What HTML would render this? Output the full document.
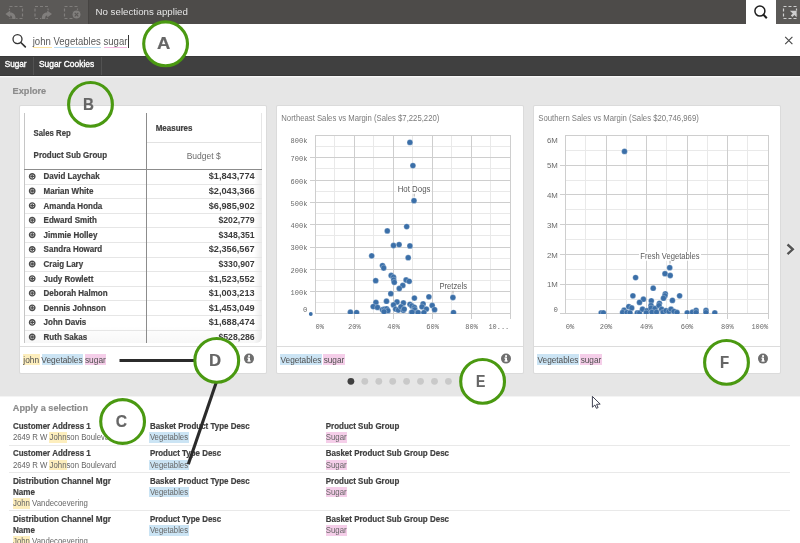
<!DOCTYPE html>
<html lang="en"><head><meta charset="utf-8"><title>Smart search</title>
<style>
html,body{margin:0;padding:0}
body{width:800px;height:543px;overflow:hidden;position:relative;background:#fff;font-family:'Liberation Sans', sans-serif;}
.abs{position:absolute}
.t{position:absolute;white-space:pre;display:block}
.card{position:absolute;background:#fff;box-shadow:0 0 0 1px #dbdbdb;border-radius:1px}
.hl{position:absolute}
</style></head><body>
<!-- top bar -->
<div class="abs" style="left:0;top:0;width:800px;height:24px;background:#4d4b49"></div>
<div class="abs" style="left:0;top:0;width:88px;height:24px;background:#5b5957"></div>
<div class="abs" style="left:88px;top:0;width:1px;height:24px;background:#464442"></div>
<div class="abs" style="left:746px;top:0;width:30px;height:24px;background:#fff"></div>
<div class="abs" style="left:776px;top:0;width:24px;height:24px;background:#5b5957"></div>
<!-- search bar -->
<div class="abs" style="left:0;top:24px;width:800px;height:32px;background:#fff"></div>
<div class="abs" style="left:0;top:56px;width:800px;height:20px;background:#404040;box-shadow:inset 0 1px 0 #383838,inset 0 -1px 0 #383838"></div>
<div class="abs" style="left:33px;top:57px;width:1px;height:18px;background:#525252"></div>
<div class="abs" style="left:101px;top:57px;width:1px;height:18px;background:#525252"></div>
<!-- explore area -->
<div class="abs" style="left:0;top:76px;width:800px;height:320px;background:#e6e6e6"></div>
<div class="abs" style="left:0;top:76px;width:800px;height:1px;background:#f7f7f7"></div>
<div class="abs" style="left:0;top:77px;width:800px;height:1px;background:#ececec"></div>
<div class="abs" style="left:0;top:396px;width:800px;height:1px;background:#f4f4f4"></div>
<!-- underline in search -->
<div class="abs" style="left:32.7px;top:47px;width:18.9px;height:1px;background:#ffe6a2"></div>
<div class="abs" style="left:54.3px;top:47px;width:47.2px;height:1px;background:#bcddf2"></div>
<div class="abs" style="left:103.8px;top:47px;width:23.6px;height:1px;background:#f2b8e0"></div>
<div class="abs" style="left:128px;top:35px;width:1px;height:13px;background:#333"></div>
<!-- cards -->
<div class="card" style="left:20px;top:106px;width:246px;height:267px"></div>
<div class="card" style="left:277px;top:106px;width:246px;height:267px"></div>
<div class="card" style="left:534px;top:106px;width:246px;height:267px"></div>
<div class="abs" style="left:20px;top:346px;width:246px;height:1px;background:#dcdcdc"></div>
<div class="abs" style="left:277px;top:346px;width:246px;height:1px;background:#dcdcdc"></div>
<div class="abs" style="left:534px;top:346px;width:246px;height:1px;background:#dcdcdc"></div>
<!-- table -->
<div class="abs" style="left:24px;top:113px;width:238px;height:230px;border-left:1px solid #c6c6c6;box-sizing:border-box;border-bottom-right-radius:6px;overflow:hidden;background:#fff">
  <div class="abs" style="left:0;top:213px;width:238px;height:17px;background:linear-gradient(to bottom,rgba(0,0,0,0) 0%,rgba(0,0,0,0.03) 100%)"></div>
  <div class="abs" style="left:229px;top:56px;width:9px;height:174px;background:linear-gradient(to right,rgba(0,0,0,0) 0%,rgba(0,0,0,0.09) 100%)"></div>
</div>
<div class="abs" style="left:25px;top:183.5px;width:237px;height:1px;background:#e6e6e6"></div><div class="abs" style="left:25px;top:198.1px;width:237px;height:1px;background:#e6e6e6"></div><div class="abs" style="left:25px;top:212.7px;width:237px;height:1px;background:#e6e6e6"></div><div class="abs" style="left:25px;top:227.3px;width:237px;height:1px;background:#e6e6e6"></div><div class="abs" style="left:25px;top:241.9px;width:237px;height:1px;background:#e6e6e6"></div><div class="abs" style="left:25px;top:256.5px;width:237px;height:1px;background:#e6e6e6"></div><div class="abs" style="left:25px;top:271.1px;width:237px;height:1px;background:#e6e6e6"></div><div class="abs" style="left:25px;top:285.7px;width:237px;height:1px;background:#e6e6e6"></div><div class="abs" style="left:25px;top:300.3px;width:237px;height:1px;background:#e6e6e6"></div><div class="abs" style="left:25px;top:314.9px;width:237px;height:1px;background:#e6e6e6"></div><div class="abs" style="left:25px;top:329.5px;width:237px;height:1px;background:#e6e6e6"></div>
<div class="abs" style="left:146px;top:113px;width:1px;height:230px;background:#8c8c8c"></div>
<div class="abs" style="left:147px;top:142px;width:115px;height:1px;background:#e2e2e2"></div>
<div class="abs" style="left:261px;top:113px;width:1px;height:56px;background:#e6e6e6"></div>
<div class="abs" style="left:24px;top:169px;width:238px;height:1px;background:#8c8c8c"></div>
<svg class="abs" style="left:0;top:0" width="270" height="345"><g transform="translate(32.2,176.4)"><circle r="2.7" fill="#fff" stroke="#4a4a4a" stroke-width="1.4"/><path d="M-1.8 0H1.8M0 -1.8V1.8" stroke="#4a4a4a" stroke-width="1.3"/></g><g transform="translate(32.2,191.0)"><circle r="2.7" fill="#fff" stroke="#4a4a4a" stroke-width="1.4"/><path d="M-1.8 0H1.8M0 -1.8V1.8" stroke="#4a4a4a" stroke-width="1.3"/></g><g transform="translate(32.2,205.6)"><circle r="2.7" fill="#fff" stroke="#4a4a4a" stroke-width="1.4"/><path d="M-1.8 0H1.8M0 -1.8V1.8" stroke="#4a4a4a" stroke-width="1.3"/></g><g transform="translate(32.2,220.2)"><circle r="2.7" fill="#fff" stroke="#4a4a4a" stroke-width="1.4"/><path d="M-1.8 0H1.8M0 -1.8V1.8" stroke="#4a4a4a" stroke-width="1.3"/></g><g transform="translate(32.2,234.8)"><circle r="2.7" fill="#fff" stroke="#4a4a4a" stroke-width="1.4"/><path d="M-1.8 0H1.8M0 -1.8V1.8" stroke="#4a4a4a" stroke-width="1.3"/></g><g transform="translate(32.2,249.4)"><circle r="2.7" fill="#fff" stroke="#4a4a4a" stroke-width="1.4"/><path d="M-1.8 0H1.8M0 -1.8V1.8" stroke="#4a4a4a" stroke-width="1.3"/></g><g transform="translate(32.2,264.0)"><circle r="2.7" fill="#fff" stroke="#4a4a4a" stroke-width="1.4"/><path d="M-1.8 0H1.8M0 -1.8V1.8" stroke="#4a4a4a" stroke-width="1.3"/></g><g transform="translate(32.2,278.6)"><circle r="2.7" fill="#fff" stroke="#4a4a4a" stroke-width="1.4"/><path d="M-1.8 0H1.8M0 -1.8V1.8" stroke="#4a4a4a" stroke-width="1.3"/></g><g transform="translate(32.2,293.2)"><circle r="2.7" fill="#fff" stroke="#4a4a4a" stroke-width="1.4"/><path d="M-1.8 0H1.8M0 -1.8V1.8" stroke="#4a4a4a" stroke-width="1.3"/></g><g transform="translate(32.2,307.8)"><circle r="2.7" fill="#fff" stroke="#4a4a4a" stroke-width="1.4"/><path d="M-1.8 0H1.8M0 -1.8V1.8" stroke="#4a4a4a" stroke-width="1.3"/></g><g transform="translate(32.2,322.4)"><circle r="2.7" fill="#fff" stroke="#4a4a4a" stroke-width="1.4"/><path d="M-1.8 0H1.8M0 -1.8V1.8" stroke="#4a4a4a" stroke-width="1.3"/></g><g transform="translate(32.2,337.0)"><circle r="2.7" fill="#fff" stroke="#4a4a4a" stroke-width="1.4"/><path d="M-1.8 0H1.8M0 -1.8V1.8" stroke="#4a4a4a" stroke-width="1.3"/></g></svg>
<!-- highlight boxes -->
<div class="hl" style="left:23px;top:354px;width:17px;height:11px;background:#fdeebd"></div>
<div class="hl" style="left:42.0px;top:354px;width:41px;height:11px;background:#cbe4f4"></div>
<div class="hl" style="left:85.0px;top:354px;width:21px;height:11px;background:#f5cee9"></div>
<div class="hl" style="left:280.1px;top:354px;width:41.5px;height:11px;background:#cbe4f4"></div>
<div class="hl" style="left:323.3px;top:354px;width:21.3px;height:11px;background:#f5cee9"></div>
<div class="hl" style="left:537.1px;top:354px;width:41.5px;height:11px;background:#cbe4f4"></div>
<div class="hl" style="left:580.3px;top:354px;width:21.3px;height:11px;background:#f5cee9"></div>
<!-- bottom list dividers -->
<div class="abs" style="left:9px;top:445px;width:781px;height:1px;background:#e9e9e9"></div>
<div class="abs" style="left:9px;top:472px;width:781px;height:1px;background:#e9e9e9"></div>
<div class="abs" style="left:9px;top:510px;width:781px;height:1px;background:#e9e9e9"></div>
<!-- bottom highlights -->
<div class="hl" style="left:49px;top:432.2px;width:17.8px;height:10.4px;background:#fdeebd"></div>
<div class="hl" style="left:49px;top:459.6px;width:17.8px;height:10.4px;background:#fdeebd"></div>
<div class="hl" style="left:12.6px;top:498.2px;width:17.8px;height:10.4px;background:#fdeebd"></div>
<div class="hl" style="left:12.6px;top:535.7px;width:17.8px;height:10.4px;background:#fdeebd"></div>
<div class="hl" style="left:149.1px;top:432.2px;width:39.7px;height:10.4px;background:#cbe4f4"></div><div class="hl" style="left:326px;top:432.2px;width:21px;height:10.4px;background:#f5cee9"></div><div class="hl" style="left:149.1px;top:459.6px;width:39.7px;height:10.4px;background:#cbe4f4"></div><div class="hl" style="left:326px;top:459.6px;width:21px;height:10.4px;background:#f5cee9"></div><div class="hl" style="left:149.1px;top:486.9px;width:39.7px;height:10.4px;background:#cbe4f4"></div><div class="hl" style="left:326px;top:486.9px;width:21px;height:10.4px;background:#f5cee9"></div><div class="hl" style="left:149.1px;top:525.2px;width:39.7px;height:10.4px;background:#cbe4f4"></div><div class="hl" style="left:326px;top:525.2px;width:21px;height:10.4px;background:#f5cee9"></div>

<svg class="abs" style="left:0;top:0" width="800" height="543" viewBox="0 0 800 543" shape-rendering="auto">
<defs>
<clipPath id="cp1"><rect x="309" y="130" width="205" height="184"/></clipPath>
<clipPath id="cp2"><rect x="560" y="130" width="212" height="184"/></clipPath>
</defs>
<line x1="334.5" y1="135" x2="334.5" y2="314.0" stroke="#e9e9e9" stroke-width="1"/>
<line x1="373.5" y1="135" x2="373.5" y2="314.0" stroke="#e9e9e9" stroke-width="1"/>
<line x1="412.5" y1="135" x2="412.5" y2="314.0" stroke="#e9e9e9" stroke-width="1"/>
<line x1="451.5" y1="135" x2="451.5" y2="314.0" stroke="#e9e9e9" stroke-width="1"/>
<line x1="490.5" y1="135" x2="490.5" y2="314.0" stroke="#e9e9e9" stroke-width="1"/>
<line x1="315.0" y1="302.5" x2="511" y2="302.5" stroke="#e9e9e9" stroke-width="1"/>
<line x1="315.0" y1="280.5" x2="511" y2="280.5" stroke="#e9e9e9" stroke-width="1"/>
<line x1="315.0" y1="258.5" x2="511" y2="258.5" stroke="#e9e9e9" stroke-width="1"/>
<line x1="315.0" y1="235.5" x2="511" y2="235.5" stroke="#e9e9e9" stroke-width="1"/>
<line x1="315.0" y1="213.5" x2="511" y2="213.5" stroke="#e9e9e9" stroke-width="1"/>
<line x1="315.0" y1="191.5" x2="511" y2="191.5" stroke="#e9e9e9" stroke-width="1"/>
<line x1="315.0" y1="168.5" x2="511" y2="168.5" stroke="#e9e9e9" stroke-width="1"/>
<line x1="315.0" y1="146.5" x2="511" y2="146.5" stroke="#e9e9e9" stroke-width="1"/>
<line x1="315.5" y1="135" x2="315.5" y2="314.0" stroke="#cecece" stroke-width="1"/>
<line x1="354.5" y1="135" x2="354.5" y2="319.0" stroke="#cecece" stroke-width="1"/>
<line x1="393.5" y1="135" x2="393.5" y2="319.0" stroke="#cecece" stroke-width="1"/>
<line x1="432.5" y1="135" x2="432.5" y2="319.0" stroke="#cecece" stroke-width="1"/>
<line x1="471.5" y1="135" x2="471.5" y2="319.0" stroke="#cecece" stroke-width="1"/>
<line x1="510.5" y1="135" x2="510.5" y2="319.0" stroke="#cecece" stroke-width="1"/>
<line x1="315.0" y1="313.5" x2="511" y2="313.5" stroke="#cecece" stroke-width="1"/>
<line x1="310.0" y1="291.5" x2="511" y2="291.5" stroke="#cecece" stroke-width="1"/>
<line x1="310.0" y1="269.5" x2="511" y2="269.5" stroke="#cecece" stroke-width="1"/>
<line x1="310.0" y1="247.5" x2="511" y2="247.5" stroke="#cecece" stroke-width="1"/>
<line x1="310.0" y1="224.5" x2="511" y2="224.5" stroke="#cecece" stroke-width="1"/>
<line x1="310.0" y1="202.5" x2="511" y2="202.5" stroke="#cecece" stroke-width="1"/>
<line x1="310.0" y1="180.5" x2="511" y2="180.5" stroke="#cecece" stroke-width="1"/>
<line x1="310.0" y1="157.5" x2="511" y2="157.5" stroke="#cecece" stroke-width="1"/>
<line x1="315.0" y1="135.5" x2="511" y2="135.5" stroke="#cecece" stroke-width="1"/>
<g clip-path="url(#cp1)"><circle cx="409.9" cy="142.4" r="2.9" fill="#3b6fa8" stroke="rgba(255,255,255,0.45)" stroke-width="0.6"/><circle cx="412.9" cy="165.6" r="2.9" fill="#3b6fa8" stroke="rgba(255,255,255,0.45)" stroke-width="0.6"/><circle cx="414" cy="200.7" r="2.9" fill="#3b6fa8" stroke="rgba(255,255,255,0.45)" stroke-width="0.6"/><circle cx="406.7" cy="226.6" r="2.9" fill="#3b6fa8" stroke="rgba(255,255,255,0.45)" stroke-width="0.6"/><circle cx="387.3" cy="230.9" r="2.9" fill="#3b6fa8" stroke="rgba(255,255,255,0.45)" stroke-width="0.6"/><circle cx="393.5" cy="245.5" r="2.9" fill="#3b6fa8" stroke="rgba(255,255,255,0.45)" stroke-width="0.6"/><circle cx="399.1" cy="244.6" r="2.9" fill="#3b6fa8" stroke="rgba(255,255,255,0.45)" stroke-width="0.6"/><circle cx="409.9" cy="245.9" r="2.9" fill="#3b6fa8" stroke="rgba(255,255,255,0.45)" stroke-width="0.6"/><circle cx="371.7" cy="255.8" r="2.9" fill="#3b6fa8" stroke="rgba(255,255,255,0.45)" stroke-width="0.6"/><circle cx="408.2" cy="257.7" r="2.9" fill="#3b6fa8" stroke="rgba(255,255,255,0.45)" stroke-width="0.6"/><circle cx="382.5" cy="265.6" r="2.9" fill="#3b6fa8" stroke="rgba(255,255,255,0.45)" stroke-width="0.6"/><circle cx="383.7" cy="268" r="2.9" fill="#3b6fa8" stroke="rgba(255,255,255,0.45)" stroke-width="0.6"/><circle cx="391.2" cy="275.5" r="2.9" fill="#3b6fa8" stroke="rgba(255,255,255,0.45)" stroke-width="0.6"/><circle cx="393.5" cy="277.2" r="2.9" fill="#3b6fa8" stroke="rgba(255,255,255,0.45)" stroke-width="0.6"/><circle cx="393.7" cy="280" r="2.9" fill="#3b6fa8" stroke="rgba(255,255,255,0.45)" stroke-width="0.6"/><circle cx="394.3" cy="282.3" r="2.9" fill="#3b6fa8" stroke="rgba(255,255,255,0.45)" stroke-width="0.6"/><circle cx="406.1" cy="280" r="2.9" fill="#3b6fa8" stroke="rgba(255,255,255,0.45)" stroke-width="0.6"/><circle cx="409.2" cy="281.3" r="2.9" fill="#3b6fa8" stroke="rgba(255,255,255,0.45)" stroke-width="0.6"/><circle cx="375.7" cy="280.7" r="2.9" fill="#3b6fa8" stroke="rgba(255,255,255,0.45)" stroke-width="0.6"/><circle cx="402.8" cy="285.4" r="2.9" fill="#3b6fa8" stroke="rgba(255,255,255,0.45)" stroke-width="0.6"/><circle cx="399.3" cy="288.5" r="2.9" fill="#3b6fa8" stroke="rgba(255,255,255,0.45)" stroke-width="0.6"/><circle cx="390.8" cy="293.7" r="2.9" fill="#3b6fa8" stroke="rgba(255,255,255,0.45)" stroke-width="0.6"/><circle cx="414.4" cy="298.1" r="2.9" fill="#3b6fa8" stroke="rgba(255,255,255,0.45)" stroke-width="0.6"/><circle cx="386.5" cy="301.2" r="2.9" fill="#3b6fa8" stroke="rgba(255,255,255,0.45)" stroke-width="0.6"/><circle cx="375.9" cy="302.4" r="2.9" fill="#3b6fa8" stroke="rgba(255,255,255,0.45)" stroke-width="0.6"/><circle cx="397" cy="302" r="2.9" fill="#3b6fa8" stroke="rgba(255,255,255,0.45)" stroke-width="0.6"/><circle cx="403.4" cy="303" r="2.9" fill="#3b6fa8" stroke="rgba(255,255,255,0.45)" stroke-width="0.6"/><circle cx="373.2" cy="306.6" r="2.9" fill="#3b6fa8" stroke="rgba(255,255,255,0.45)" stroke-width="0.6"/><circle cx="377.5" cy="307.4" r="2.9" fill="#3b6fa8" stroke="rgba(255,255,255,0.45)" stroke-width="0.6"/><circle cx="393.5" cy="304.9" r="2.9" fill="#3b6fa8" stroke="rgba(255,255,255,0.45)" stroke-width="0.6"/><circle cx="410" cy="304.3" r="2.9" fill="#3b6fa8" stroke="rgba(255,255,255,0.45)" stroke-width="0.6"/><circle cx="411.9" cy="305.9" r="2.9" fill="#3b6fa8" stroke="rgba(255,255,255,0.45)" stroke-width="0.6"/><circle cx="414.4" cy="307.4" r="2.9" fill="#3b6fa8" stroke="rgba(255,255,255,0.45)" stroke-width="0.6"/><circle cx="382.5" cy="309.7" r="2.9" fill="#3b6fa8" stroke="rgba(255,255,255,0.45)" stroke-width="0.6"/><circle cx="384.4" cy="309.1" r="2.9" fill="#3b6fa8" stroke="rgba(255,255,255,0.45)" stroke-width="0.6"/><circle cx="386.7" cy="308.8" r="2.9" fill="#3b6fa8" stroke="rgba(255,255,255,0.45)" stroke-width="0.6"/><circle cx="387.9" cy="310.7" r="2.9" fill="#3b6fa8" stroke="rgba(255,255,255,0.45)" stroke-width="0.6"/><circle cx="384" cy="311.7" r="2.9" fill="#3b6fa8" stroke="rgba(255,255,255,0.45)" stroke-width="0.6"/><circle cx="395.6" cy="309.1" r="2.9" fill="#3b6fa8" stroke="rgba(255,255,255,0.45)" stroke-width="0.6"/><circle cx="398.3" cy="310.1" r="2.9" fill="#3b6fa8" stroke="rgba(255,255,255,0.45)" stroke-width="0.6"/><circle cx="400.9" cy="306.8" r="2.9" fill="#3b6fa8" stroke="rgba(255,255,255,0.45)" stroke-width="0.6"/><circle cx="403.4" cy="310.3" r="2.9" fill="#3b6fa8" stroke="rgba(255,255,255,0.45)" stroke-width="0.6"/><circle cx="404.2" cy="309.1" r="2.9" fill="#3b6fa8" stroke="rgba(255,255,255,0.45)" stroke-width="0.6"/><circle cx="411.5" cy="312.6" r="2.9" fill="#3b6fa8" stroke="rgba(255,255,255,0.45)" stroke-width="0.6"/><circle cx="414.8" cy="309.7" r="2.9" fill="#3b6fa8" stroke="rgba(255,255,255,0.45)" stroke-width="0.6"/><circle cx="417.7" cy="312.6" r="2.9" fill="#3b6fa8" stroke="rgba(255,255,255,0.45)" stroke-width="0.6"/><circle cx="350.4" cy="312.2" r="2.9" fill="#3b6fa8" stroke="rgba(255,255,255,0.45)" stroke-width="0.6"/><circle cx="356.6" cy="312.6" r="2.9" fill="#3b6fa8" stroke="rgba(255,255,255,0.45)" stroke-width="0.6"/><circle cx="428.9" cy="296.8" r="2.9" fill="#3b6fa8" stroke="rgba(255,255,255,0.45)" stroke-width="0.6"/><circle cx="452.9" cy="297.5" r="2.9" fill="#3b6fa8" stroke="rgba(255,255,255,0.45)" stroke-width="0.6"/><circle cx="423.1" cy="303.9" r="2.9" fill="#3b6fa8" stroke="rgba(255,255,255,0.45)" stroke-width="0.6"/><circle cx="422" cy="306.8" r="2.9" fill="#3b6fa8" stroke="rgba(255,255,255,0.45)" stroke-width="0.6"/><circle cx="432.2" cy="305.5" r="2.9" fill="#3b6fa8" stroke="rgba(255,255,255,0.45)" stroke-width="0.6"/><circle cx="426.4" cy="309.1" r="2.9" fill="#3b6fa8" stroke="rgba(255,255,255,0.45)" stroke-width="0.6"/><circle cx="434.6" cy="309.7" r="2.9" fill="#3b6fa8" stroke="rgba(255,255,255,0.45)" stroke-width="0.6"/><circle cx="418.1" cy="312.6" r="2.9" fill="#3b6fa8" stroke="rgba(255,255,255,0.45)" stroke-width="0.6"/><circle cx="423.9" cy="312.6" r="2.9" fill="#3b6fa8" stroke="rgba(255,255,255,0.45)" stroke-width="0.6"/><circle cx="412" cy="312.2" r="2.9" fill="#3b6fa8" stroke="rgba(255,255,255,0.45)" stroke-width="0.6"/><circle cx="453.5" cy="312.6" r="2.9" fill="#3b6fa8" stroke="rgba(255,255,255,0.45)" stroke-width="0.6"/></g>
<circle cx="310.8" cy="314" r="1.9" fill="#3b6fa8"/>
<rect x="396.3" y="184.5" width="35" height="9" fill="#fff"/>
<rect x="438" y="281.6" width="30.4" height="9" fill="#fff"/>
<line x1="414.2" y1="193.8" x2="414.2" y2="196.6" stroke="#aaa" stroke-width="1"/>
<line x1="453" y1="290.8" x2="453" y2="293.6" stroke="#aaa" stroke-width="1"/>
<line x1="585.5" y1="135" x2="585.5" y2="314.0" stroke="#e9e9e9" stroke-width="1"/>
<line x1="626.5" y1="135" x2="626.5" y2="314.0" stroke="#e9e9e9" stroke-width="1"/>
<line x1="666.5" y1="135" x2="666.5" y2="314.0" stroke="#e9e9e9" stroke-width="1"/>
<line x1="707.5" y1="135" x2="707.5" y2="314.0" stroke="#e9e9e9" stroke-width="1"/>
<line x1="747.5" y1="135" x2="747.5" y2="314.0" stroke="#e9e9e9" stroke-width="1"/>
<line x1="565.0" y1="299.5" x2="769" y2="299.5" stroke="#e9e9e9" stroke-width="1"/>
<line x1="565.0" y1="269.5" x2="769" y2="269.5" stroke="#e9e9e9" stroke-width="1"/>
<line x1="565.0" y1="239.5" x2="769" y2="239.5" stroke="#e9e9e9" stroke-width="1"/>
<line x1="565.0" y1="209.5" x2="769" y2="209.5" stroke="#e9e9e9" stroke-width="1"/>
<line x1="565.0" y1="180.5" x2="769" y2="180.5" stroke="#e9e9e9" stroke-width="1"/>
<line x1="565.0" y1="150.5" x2="769" y2="150.5" stroke="#e9e9e9" stroke-width="1"/>
<line x1="565.5" y1="135" x2="565.5" y2="314.0" stroke="#cecece" stroke-width="1"/>
<line x1="606.5" y1="135" x2="606.5" y2="319.0" stroke="#cecece" stroke-width="1"/>
<line x1="646.5" y1="135" x2="646.5" y2="319.0" stroke="#cecece" stroke-width="1"/>
<line x1="687.5" y1="135" x2="687.5" y2="319.0" stroke="#cecece" stroke-width="1"/>
<line x1="727.5" y1="135" x2="727.5" y2="319.0" stroke="#cecece" stroke-width="1"/>
<line x1="768.5" y1="135" x2="768.5" y2="319.0" stroke="#cecece" stroke-width="1"/>
<line x1="560.0" y1="313.5" x2="769" y2="313.5" stroke="#cecece" stroke-width="1"/>
<line x1="560.0" y1="284.5" x2="769" y2="284.5" stroke="#cecece" stroke-width="1"/>
<line x1="560.0" y1="254.5" x2="769" y2="254.5" stroke="#cecece" stroke-width="1"/>
<line x1="560.0" y1="224.5" x2="769" y2="224.5" stroke="#cecece" stroke-width="1"/>
<line x1="560.0" y1="194.5" x2="769" y2="194.5" stroke="#cecece" stroke-width="1"/>
<line x1="560.0" y1="165.5" x2="769" y2="165.5" stroke="#cecece" stroke-width="1"/>
<line x1="565.0" y1="135.5" x2="769" y2="135.5" stroke="#cecece" stroke-width="1"/>
<g clip-path="url(#cp2)"><circle cx="624.5" cy="151.4" r="2.9" fill="#3b6fa8" stroke="rgba(255,255,255,0.45)" stroke-width="0.6"/><circle cx="635.6" cy="277.6" r="2.9" fill="#3b6fa8" stroke="rgba(255,255,255,0.45)" stroke-width="0.6"/><circle cx="653.2" cy="288.2" r="2.9" fill="#3b6fa8" stroke="rgba(255,255,255,0.45)" stroke-width="0.6"/><circle cx="632.9" cy="295.8" r="2.9" fill="#3b6fa8" stroke="rgba(255,255,255,0.45)" stroke-width="0.6"/><circle cx="643.4" cy="299.2" r="2.9" fill="#3b6fa8" stroke="rgba(255,255,255,0.45)" stroke-width="0.6"/><circle cx="639.5" cy="302.4" r="2.9" fill="#3b6fa8" stroke="rgba(255,255,255,0.45)" stroke-width="0.6"/><circle cx="651.3" cy="300.8" r="2.9" fill="#3b6fa8" stroke="rgba(255,255,255,0.45)" stroke-width="0.6"/><circle cx="659.4" cy="303.3" r="2.9" fill="#3b6fa8" stroke="rgba(255,255,255,0.45)" stroke-width="0.6"/><circle cx="665.3" cy="293.8" r="2.9" fill="#3b6fa8" stroke="rgba(255,255,255,0.45)" stroke-width="0.6"/><circle cx="664.9" cy="295.7" r="2.9" fill="#3b6fa8" stroke="rgba(255,255,255,0.45)" stroke-width="0.6"/><circle cx="663.5" cy="298.2" r="2.9" fill="#3b6fa8" stroke="rgba(255,255,255,0.45)" stroke-width="0.6"/><circle cx="665" cy="273.7" r="2.9" fill="#3b6fa8" stroke="rgba(255,255,255,0.45)" stroke-width="0.6"/><circle cx="669.7" cy="267.7" r="2.9" fill="#3b6fa8" stroke="rgba(255,255,255,0.45)" stroke-width="0.6"/><circle cx="670.2" cy="275.5" r="2.9" fill="#3b6fa8" stroke="rgba(255,255,255,0.45)" stroke-width="0.6"/><circle cx="628.8" cy="306.6" r="2.9" fill="#3b6fa8" stroke="rgba(255,255,255,0.45)" stroke-width="0.6"/><circle cx="631.7" cy="308" r="2.9" fill="#3b6fa8" stroke="rgba(255,255,255,0.45)" stroke-width="0.6"/><circle cx="624.1" cy="310.2" r="2.9" fill="#3b6fa8" stroke="rgba(255,255,255,0.45)" stroke-width="0.6"/><circle cx="622.6" cy="312.5" r="2.9" fill="#3b6fa8" stroke="rgba(255,255,255,0.45)" stroke-width="0.6"/><circle cx="627" cy="312.5" r="2.9" fill="#3b6fa8" stroke="rgba(255,255,255,0.45)" stroke-width="0.6"/><circle cx="630" cy="312.9" r="2.9" fill="#3b6fa8" stroke="rgba(255,255,255,0.45)" stroke-width="0.6"/><circle cx="637.3" cy="312.9" r="2.9" fill="#3b6fa8" stroke="rgba(255,255,255,0.45)" stroke-width="0.6"/><circle cx="639.5" cy="312.9" r="2.9" fill="#3b6fa8" stroke="rgba(255,255,255,0.45)" stroke-width="0.6"/><circle cx="642.5" cy="309.2" r="2.9" fill="#3b6fa8" stroke="rgba(255,255,255,0.45)" stroke-width="0.6"/><circle cx="646.9" cy="310.7" r="2.9" fill="#3b6fa8" stroke="rgba(255,255,255,0.45)" stroke-width="0.6"/><circle cx="646.2" cy="312.9" r="2.9" fill="#3b6fa8" stroke="rgba(255,255,255,0.45)" stroke-width="0.6"/><circle cx="651" cy="305.5" r="2.9" fill="#3b6fa8" stroke="rgba(255,255,255,0.45)" stroke-width="0.6"/><circle cx="651" cy="308" r="2.9" fill="#3b6fa8" stroke="rgba(255,255,255,0.45)" stroke-width="0.6"/><circle cx="655" cy="308.5" r="2.9" fill="#3b6fa8" stroke="rgba(255,255,255,0.45)" stroke-width="0.6"/><circle cx="659" cy="305.5" r="2.9" fill="#3b6fa8" stroke="rgba(255,255,255,0.45)" stroke-width="0.6"/><circle cx="661.6" cy="309.2" r="2.9" fill="#3b6fa8" stroke="rgba(255,255,255,0.45)" stroke-width="0.6"/><circle cx="652" cy="312.2" r="2.9" fill="#3b6fa8" stroke="rgba(255,255,255,0.45)" stroke-width="0.6"/><circle cx="656.5" cy="312.2" r="2.9" fill="#3b6fa8" stroke="rgba(255,255,255,0.45)" stroke-width="0.6"/><circle cx="663.1" cy="312.2" r="2.9" fill="#3b6fa8" stroke="rgba(255,255,255,0.45)" stroke-width="0.6"/><circle cx="666" cy="310.7" r="2.9" fill="#3b6fa8" stroke="rgba(255,255,255,0.45)" stroke-width="0.6"/><circle cx="669" cy="311.4" r="2.9" fill="#3b6fa8" stroke="rgba(255,255,255,0.45)" stroke-width="0.6"/><circle cx="601.2" cy="312.9" r="2.9" fill="#3b6fa8" stroke="rgba(255,255,255,0.45)" stroke-width="0.6"/><circle cx="603.4" cy="312.9" r="2.9" fill="#3b6fa8" stroke="rgba(255,255,255,0.45)" stroke-width="0.6"/><circle cx="679.6" cy="295.8" r="2.9" fill="#3b6fa8" stroke="rgba(255,255,255,0.45)" stroke-width="0.6"/><circle cx="672.4" cy="300.4" r="2.9" fill="#3b6fa8" stroke="rgba(255,255,255,0.45)" stroke-width="0.6"/><circle cx="671" cy="309.2" r="2.9" fill="#3b6fa8" stroke="rgba(255,255,255,0.45)" stroke-width="0.6"/><circle cx="674" cy="311.4" r="2.9" fill="#3b6fa8" stroke="rgba(255,255,255,0.45)" stroke-width="0.6"/><circle cx="677" cy="312.5" r="2.9" fill="#3b6fa8" stroke="rgba(255,255,255,0.45)" stroke-width="0.6"/><circle cx="687.2" cy="312.9" r="2.9" fill="#3b6fa8" stroke="rgba(255,255,255,0.45)" stroke-width="0.6"/><circle cx="692.4" cy="312.2" r="2.9" fill="#3b6fa8" stroke="rgba(255,255,255,0.45)" stroke-width="0.6"/><circle cx="696.1" cy="310.4" r="2.9" fill="#3b6fa8" stroke="rgba(255,255,255,0.45)" stroke-width="0.6"/><circle cx="696.1" cy="312.5" r="2.9" fill="#3b6fa8" stroke="rgba(255,255,255,0.45)" stroke-width="0.6"/><circle cx="706" cy="310.4" r="2.9" fill="#3b6fa8" stroke="rgba(255,255,255,0.45)" stroke-width="0.6"/><circle cx="706" cy="312.5" r="2.9" fill="#3b6fa8" stroke="rgba(255,255,255,0.45)" stroke-width="0.6"/><circle cx="714.8" cy="312.9" r="2.9" fill="#3b6fa8" stroke="rgba(255,255,255,0.45)" stroke-width="0.6"/></g>
<rect x="639" y="251.7" width="62" height="9" fill="#fff"/>
<line x1="670" y1="260.8" x2="670" y2="263.6" stroke="#aaa" stroke-width="1"/>
</svg>

<svg class="abs" style="left:0;top:0;will-change:transform;font-family:'Liberation Sans',sans-serif" width="800" height="543" viewBox="0 0 800 543" xml:space="preserve"><text x="95.50" y="15.00" font-size="9.2" fill="#e6e6e6" textLength="92.40" lengthAdjust="spacingAndGlyphs">No selections applied</text>
<text x="32.70" y="44.50" font-size="10" fill="#595959" textLength="94.70" lengthAdjust="spacingAndGlyphs">john Vegetables sugar</text>
<text x="4.70" y="66.70" font-size="8.3" stroke="#ffffff" stroke-width="0.35" fill="#ffffff" textLength="21.90" lengthAdjust="spacingAndGlyphs">Sugar</text>
<text x="38.90" y="66.70" font-size="8.3" stroke="#ffffff" stroke-width="0.35" fill="#ffffff" textLength="55.30" lengthAdjust="spacingAndGlyphs">Sugar Cookies</text>
<text x="12.60" y="93.90" font-size="9.2" font-weight="bold" stroke="#8c8c8c" stroke-width="0.2" fill="#8c8c8c" textLength="33.60" lengthAdjust="spacingAndGlyphs">Explore</text>
<text x="12.80" y="411.10" font-size="9.2" font-weight="bold" stroke="#8c8c8c" stroke-width="0.2" fill="#8c8c8c" textLength="75.20" lengthAdjust="spacingAndGlyphs">Apply a selection</text>
<text x="33.60" y="136.30" font-size="8.4" font-weight="bold" stroke="#404040" stroke-width="0.2" fill="#404040" textLength="37.10" lengthAdjust="spacingAndGlyphs">Sales Rep</text>
<text x="33.60" y="158.30" font-size="8.4" font-weight="bold" stroke="#404040" stroke-width="0.2" fill="#404040" textLength="73.40" lengthAdjust="spacingAndGlyphs">Product Sub Group</text>
<text x="155.70" y="131.00" font-size="8.4" font-weight="bold" stroke="#404040" stroke-width="0.2" fill="#404040" textLength="36.80" lengthAdjust="spacingAndGlyphs">Measures</text>
<text x="186.70" y="158.70" font-size="8.4" fill="#6c6c6c" textLength="34.10" lengthAdjust="spacingAndGlyphs">Budget $</text>
<text x="43.60" y="179.30" font-size="8.4" font-weight="bold" stroke="#404040" stroke-width="0.2" fill="#404040" textLength="56.02" lengthAdjust="spacingAndGlyphs">David Laychak</text>
<text x="254.70" y="179.30" font-size="8.4" font-weight="bold" fill="#3c3c3c" text-anchor="end" textLength="46.00" lengthAdjust="spacingAndGlyphs">$1,843,774</text>
<text x="43.60" y="193.90" font-size="8.4" font-weight="bold" stroke="#404040" stroke-width="0.2" fill="#404040" textLength="49.78" lengthAdjust="spacingAndGlyphs">Marian White</text>
<text x="254.70" y="193.90" font-size="8.4" font-weight="bold" fill="#3c3c3c" text-anchor="end" textLength="46.00" lengthAdjust="spacingAndGlyphs">$2,043,366</text>
<text x="43.60" y="208.50" font-size="8.4" font-weight="bold" stroke="#404040" stroke-width="0.2" fill="#404040" textLength="58.67" lengthAdjust="spacingAndGlyphs">Amanda Honda</text>
<text x="254.70" y="208.50" font-size="8.4" font-weight="bold" fill="#3c3c3c" text-anchor="end" textLength="46.00" lengthAdjust="spacingAndGlyphs">$6,985,902</text>
<text x="43.60" y="223.10" font-size="8.4" font-weight="bold" stroke="#404040" stroke-width="0.2" fill="#404040" textLength="53.33" lengthAdjust="spacingAndGlyphs">Edward Smith</text>
<text x="254.70" y="223.10" font-size="8.4" font-weight="bold" fill="#3c3c3c" text-anchor="end" textLength="36.26" lengthAdjust="spacingAndGlyphs">$202,779</text>
<text x="43.60" y="237.70" font-size="8.4" font-weight="bold" stroke="#404040" stroke-width="0.2" fill="#404040" textLength="53.79" lengthAdjust="spacingAndGlyphs">Jimmie Holley</text>
<text x="254.70" y="237.70" font-size="8.4" font-weight="bold" fill="#3c3c3c" text-anchor="end" textLength="36.26" lengthAdjust="spacingAndGlyphs">$348,351</text>
<text x="43.60" y="252.30" font-size="8.4" font-weight="bold" stroke="#404040" stroke-width="0.2" fill="#404040" textLength="58.67" lengthAdjust="spacingAndGlyphs">Sandra Howard</text>
<text x="254.70" y="252.30" font-size="8.4" font-weight="bold" fill="#3c3c3c" text-anchor="end" textLength="46.00" lengthAdjust="spacingAndGlyphs">$2,356,567</text>
<text x="43.60" y="266.90" font-size="8.4" font-weight="bold" stroke="#404040" stroke-width="0.2" fill="#404040" textLength="39.57" lengthAdjust="spacingAndGlyphs">Craig Lary</text>
<text x="254.70" y="266.90" font-size="8.4" font-weight="bold" fill="#3c3c3c" text-anchor="end" textLength="36.26" lengthAdjust="spacingAndGlyphs">$330,907</text>
<text x="43.60" y="281.50" font-size="8.4" font-weight="bold" stroke="#404040" stroke-width="0.2" fill="#404040" textLength="49.78" lengthAdjust="spacingAndGlyphs">Judy Rowlett</text>
<text x="254.70" y="281.50" font-size="8.4" font-weight="bold" fill="#3c3c3c" text-anchor="end" textLength="46.00" lengthAdjust="spacingAndGlyphs">$1,523,552</text>
<text x="43.60" y="296.10" font-size="8.4" font-weight="bold" stroke="#404040" stroke-width="0.2" fill="#404040" textLength="64.00" lengthAdjust="spacingAndGlyphs">Deborah Halmon</text>
<text x="254.70" y="296.10" font-size="8.4" font-weight="bold" fill="#3c3c3c" text-anchor="end" textLength="46.00" lengthAdjust="spacingAndGlyphs">$1,003,213</text>
<text x="43.60" y="310.70" font-size="8.4" font-weight="bold" stroke="#404040" stroke-width="0.2" fill="#404040" textLength="62.22" lengthAdjust="spacingAndGlyphs">Dennis Johnson</text>
<text x="254.70" y="310.70" font-size="8.4" font-weight="bold" fill="#3c3c3c" text-anchor="end" textLength="46.00" lengthAdjust="spacingAndGlyphs">$1,453,049</text>
<text x="43.60" y="325.30" font-size="8.4" font-weight="bold" stroke="#404040" stroke-width="0.2" fill="#404040" textLength="42.68" lengthAdjust="spacingAndGlyphs">John Davis</text>
<text x="254.70" y="325.30" font-size="8.4" font-weight="bold" fill="#3c3c3c" text-anchor="end" textLength="46.00" lengthAdjust="spacingAndGlyphs">$1,688,474</text>
<text x="43.60" y="339.90" font-size="8.4" font-weight="bold" stroke="#404040" stroke-width="0.2" fill="#404040" textLength="43.57" lengthAdjust="spacingAndGlyphs">Ruth Sakas</text>
<text x="254.70" y="339.90" font-size="8.4" font-weight="bold" fill="#3c3c3c" text-anchor="end" textLength="36.26" lengthAdjust="spacingAndGlyphs">$528,286</text>
<text x="23.30" y="363.40" font-size="9.4" fill="#4f4f4f" textLength="82.50" lengthAdjust="spacingAndGlyphs">john Vegetables sugar</text>
<text x="280.50" y="363.40" font-size="9.4" fill="#4f4f4f" textLength="63.80" lengthAdjust="spacingAndGlyphs">Vegetables sugar</text>
<text x="537.50" y="363.40" font-size="9.4" fill="#4f4f4f" textLength="63.80" lengthAdjust="spacingAndGlyphs">Vegetables sugar</text>
<text x="281.30" y="121.00" font-size="8.2" fill="#7a7a7a" textLength="158.00" lengthAdjust="spacingAndGlyphs">Northeast Sales vs Margin (Sales $7,225,220)</text>
<text x="538.30" y="121.00" font-size="8.2" fill="#7a7a7a" textLength="160.50" lengthAdjust="spacingAndGlyphs">Southern Sales vs Margin (Sales $20,746,969)</text>
<text x="12.90" y="429.00" font-size="8.4" font-weight="bold" stroke="#404040" stroke-width="0.2" fill="#404040" textLength="77.90" lengthAdjust="spacingAndGlyphs">Customer Address 1</text>
<text x="149.90" y="429.00" font-size="8.4" font-weight="bold" stroke="#404040" stroke-width="0.2" fill="#404040" textLength="99.80" lengthAdjust="spacingAndGlyphs">Basket Product Type Desc</text>
<text x="325.80" y="429.00" font-size="8.4" font-weight="bold" stroke="#404040" stroke-width="0.2" fill="#404040" textLength="73.50" lengthAdjust="spacingAndGlyphs">Product Sub Group</text>
<text x="12.90" y="456.10" font-size="8.4" font-weight="bold" stroke="#404040" stroke-width="0.2" fill="#404040" textLength="77.90" lengthAdjust="spacingAndGlyphs">Customer Address 1</text>
<text x="149.90" y="456.10" font-size="8.4" font-weight="bold" stroke="#404040" stroke-width="0.2" fill="#404040" textLength="71.30" lengthAdjust="spacingAndGlyphs">Product Type Desc</text>
<text x="325.80" y="456.10" font-size="8.4" font-weight="bold" stroke="#404040" stroke-width="0.2" fill="#404040" textLength="123.20" lengthAdjust="spacingAndGlyphs">Basket Product Sub Group Desc</text>
<text x="12.90" y="483.60" font-size="8.4" font-weight="bold" stroke="#404040" stroke-width="0.2" fill="#404040" textLength="98.00" lengthAdjust="spacingAndGlyphs">Distribution Channel Mgr</text>
<text x="12.90" y="494.80" font-size="8.4" font-weight="bold" stroke="#404040" stroke-width="0.2" fill="#404040" textLength="22.00" lengthAdjust="spacingAndGlyphs">Name</text>
<text x="149.90" y="483.60" font-size="8.4" font-weight="bold" stroke="#404040" stroke-width="0.2" fill="#404040" textLength="99.80" lengthAdjust="spacingAndGlyphs">Basket Product Type Desc</text>
<text x="325.80" y="483.60" font-size="8.4" font-weight="bold" stroke="#404040" stroke-width="0.2" fill="#404040" textLength="73.50" lengthAdjust="spacingAndGlyphs">Product Sub Group</text>
<text x="12.90" y="521.90" font-size="8.4" font-weight="bold" stroke="#404040" stroke-width="0.2" fill="#404040" textLength="98.00" lengthAdjust="spacingAndGlyphs">Distribution Channel Mgr</text>
<text x="12.90" y="533.30" font-size="8.4" font-weight="bold" stroke="#404040" stroke-width="0.2" fill="#404040" textLength="22.00" lengthAdjust="spacingAndGlyphs">Name</text>
<text x="149.90" y="521.90" font-size="8.4" font-weight="bold" stroke="#404040" stroke-width="0.2" fill="#404040" textLength="71.30" lengthAdjust="spacingAndGlyphs">Product Type Desc</text>
<text x="325.80" y="521.90" font-size="8.4" font-weight="bold" stroke="#404040" stroke-width="0.2" fill="#404040" textLength="123.20" lengthAdjust="spacingAndGlyphs">Basket Product Sub Group Desc</text>
<text x="12.90" y="440.20" font-size="8.4" fill="#666" textLength="103.30" lengthAdjust="spacingAndGlyphs">2649 R W Johnson Boulevard</text>
<text x="12.90" y="467.60" font-size="8.4" fill="#666" textLength="103.30" lengthAdjust="spacingAndGlyphs">2649 R W Johnson Boulevard</text>
<text x="13.00" y="506.20" font-size="8.4" fill="#666" textLength="74.90" lengthAdjust="spacingAndGlyphs">John Vandecoevering</text>
<text x="13.00" y="543.70" font-size="8.4" fill="#666" textLength="74.90" lengthAdjust="spacingAndGlyphs">John Vandecoevering</text>
<text x="149.90" y="440.20" font-size="8.4" fill="#666" textLength="38.10" lengthAdjust="spacingAndGlyphs">Vegetables</text>
<text x="325.80" y="440.20" font-size="8.4" fill="#666" textLength="20.90" lengthAdjust="spacingAndGlyphs">Sugar</text>
<text x="149.90" y="467.60" font-size="8.4" fill="#666" textLength="38.10" lengthAdjust="spacingAndGlyphs">Vegetables</text>
<text x="325.80" y="467.60" font-size="8.4" fill="#666" textLength="20.90" lengthAdjust="spacingAndGlyphs">Sugar</text>
<text x="149.90" y="494.90" font-size="8.4" fill="#666" textLength="38.10" lengthAdjust="spacingAndGlyphs">Vegetables</text>
<text x="325.80" y="494.90" font-size="8.4" fill="#666" textLength="20.90" lengthAdjust="spacingAndGlyphs">Sugar</text>
<text x="149.90" y="533.20" font-size="8.4" fill="#666" textLength="38.10" lengthAdjust="spacingAndGlyphs">Vegetables</text>
<text x="325.80" y="533.20" font-size="8.4" fill="#666" textLength="20.90" lengthAdjust="spacingAndGlyphs">Sugar</text>
<text x="307.40" y="143.10" font-size="8.0" fill="#6a6a6a" text-anchor="end" font-family="Liberation Mono, monospace" textLength="16.78" lengthAdjust="spacingAndGlyphs">800k</text>
<text x="307.40" y="160.90" font-size="8.0" fill="#6a6a6a" text-anchor="end" font-family="Liberation Mono, monospace" textLength="16.78" lengthAdjust="spacingAndGlyphs">700k</text>
<text x="307.40" y="183.50" font-size="8.0" fill="#6a6a6a" text-anchor="end" font-family="Liberation Mono, monospace" textLength="16.78" lengthAdjust="spacingAndGlyphs">600k</text>
<text x="307.40" y="205.70" font-size="8.0" fill="#6a6a6a" text-anchor="end" font-family="Liberation Mono, monospace" textLength="16.78" lengthAdjust="spacingAndGlyphs">500k</text>
<text x="307.40" y="227.90" font-size="8.0" fill="#6a6a6a" text-anchor="end" font-family="Liberation Mono, monospace" textLength="16.78" lengthAdjust="spacingAndGlyphs">400k</text>
<text x="307.40" y="250.30" font-size="8.0" fill="#6a6a6a" text-anchor="end" font-family="Liberation Mono, monospace" textLength="16.78" lengthAdjust="spacingAndGlyphs">300k</text>
<text x="307.40" y="272.60" font-size="8.0" fill="#6a6a6a" text-anchor="end" font-family="Liberation Mono, monospace" textLength="16.78" lengthAdjust="spacingAndGlyphs">200k</text>
<text x="307.40" y="294.90" font-size="8.0" fill="#6a6a6a" text-anchor="end" font-family="Liberation Mono, monospace" textLength="16.78" lengthAdjust="spacingAndGlyphs">100k</text>
<text x="307.40" y="312.20" font-size="8.0" fill="#6a6a6a" text-anchor="end" font-family="Liberation Mono, monospace" textLength="4.42" lengthAdjust="spacingAndGlyphs">0</text>
<text x="315.50" y="329.30" font-size="8.0" fill="#6a6a6a" font-family="Liberation Mono, monospace" textLength="8.54" lengthAdjust="spacingAndGlyphs">0%</text>
<text x="354.30" y="329.30" font-size="8.0" fill="#6a6a6a" text-anchor="middle" font-family="Liberation Mono, monospace" textLength="12.66" lengthAdjust="spacingAndGlyphs">20%</text>
<text x="393.70" y="329.30" font-size="8.0" fill="#6a6a6a" text-anchor="middle" font-family="Liberation Mono, monospace" textLength="12.66" lengthAdjust="spacingAndGlyphs">40%</text>
<text x="432.70" y="329.30" font-size="8.0" fill="#6a6a6a" text-anchor="middle" font-family="Liberation Mono, monospace" textLength="12.66" lengthAdjust="spacingAndGlyphs">60%</text>
<text x="471.60" y="329.30" font-size="8.0" fill="#6a6a6a" text-anchor="middle" font-family="Liberation Mono, monospace" textLength="12.66" lengthAdjust="spacingAndGlyphs">80%</text>
<text x="509.30" y="329.30" font-size="8.0" fill="#6a6a6a" text-anchor="end" font-family="Liberation Mono, monospace" textLength="20.90" lengthAdjust="spacingAndGlyphs">10...</text>
<text x="557.90" y="143.10" font-size="8.0" fill="#6a6a6a" text-anchor="end" textLength="10.90" lengthAdjust="spacingAndGlyphs">6M</text>
<text x="557.90" y="168.30" font-size="8.0" fill="#6a6a6a" text-anchor="end" textLength="10.90" lengthAdjust="spacingAndGlyphs">5M</text>
<text x="557.90" y="198.10" font-size="8.0" fill="#6a6a6a" text-anchor="end" textLength="10.90" lengthAdjust="spacingAndGlyphs">4M</text>
<text x="557.90" y="227.70" font-size="8.0" fill="#6a6a6a" text-anchor="end" textLength="10.90" lengthAdjust="spacingAndGlyphs">3M</text>
<text x="557.90" y="257.50" font-size="8.0" fill="#6a6a6a" text-anchor="end" textLength="10.90" lengthAdjust="spacingAndGlyphs">2M</text>
<text x="557.90" y="287.30" font-size="8.0" fill="#6a6a6a" text-anchor="end" textLength="10.90" lengthAdjust="spacingAndGlyphs">1M</text>
<text x="558.00" y="312.20" font-size="8.0" fill="#6a6a6a" text-anchor="end" font-family="Liberation Mono, monospace" textLength="4.42" lengthAdjust="spacingAndGlyphs">0</text>
<text x="565.80" y="329.30" font-size="8.0" fill="#6a6a6a" font-family="Liberation Mono, monospace" textLength="8.54" lengthAdjust="spacingAndGlyphs">0%</text>
<text x="606.00" y="329.30" font-size="8.0" fill="#6a6a6a" text-anchor="middle" font-family="Liberation Mono, monospace" textLength="12.66" lengthAdjust="spacingAndGlyphs">20%</text>
<text x="646.40" y="329.30" font-size="8.0" fill="#6a6a6a" text-anchor="middle" font-family="Liberation Mono, monospace" textLength="12.66" lengthAdjust="spacingAndGlyphs">40%</text>
<text x="687.00" y="329.30" font-size="8.0" fill="#6a6a6a" text-anchor="middle" font-family="Liberation Mono, monospace" textLength="12.66" lengthAdjust="spacingAndGlyphs">60%</text>
<text x="727.40" y="329.30" font-size="8.0" fill="#6a6a6a" text-anchor="middle" font-family="Liberation Mono, monospace" textLength="12.66" lengthAdjust="spacingAndGlyphs">80%</text>
<text x="768.20" y="329.30" font-size="8.0" fill="#6a6a6a" text-anchor="end" font-family="Liberation Mono, monospace" textLength="16.78" lengthAdjust="spacingAndGlyphs">100%</text>
<text x="397.70" y="192.00" font-size="8.2" fill="#595959" textLength="32.80" lengthAdjust="spacingAndGlyphs">Hot Dogs</text>
<text x="439.40" y="289.10" font-size="8.2" fill="#595959" textLength="27.60" lengthAdjust="spacingAndGlyphs">Pretzels</text>
<text x="640.30" y="259.20" font-size="8.2" fill="#595959" textLength="59.20" lengthAdjust="spacingAndGlyphs">Fresh Vegetables</text></svg>
<!-- icons + overlays -->
<svg class="abs" style="left:0;top:0" width="800" height="543" viewBox="0 0 800 543">
  <!-- toolbar icons (disabled) -->
  <g fill="none" stroke="#807e7c" stroke-width="1.2">
    <path d="M9.5 6.5h13v12h-13z" stroke-dasharray="3 2"/>
    <path d="M35 6.5h13v12h-13z" stroke-dasharray="3 2"/>
    <path d="M64.5 6.5h13v12h-13z" stroke-dasharray="3 2"/>
  </g>
  <path d="M5.4 14l4.8-3.6v2.2c3.6 0 5.4 2.200 5.400 6.400h-3.400c0-2.300-0.500-3.400-2-3.400v2z" fill="#807e7c" stroke="#5b5957" stroke-width="1.4" paint-order="stroke"/>
  <path d="M52 14l-4.8-3.600v2.200c-3.600 0-5.400 2.200-5.400 6.400h3.400c0-2.300 0.500-3.400 2-3.400v2z" fill="#807e7c" stroke="#5b5957" stroke-width="1.4" paint-order="stroke"/>
  <circle cx="76.500" cy="14.600" r="4.600" fill="#807e7c" stroke="#5b5957" stroke-width="1.200"/>
  <path d="M74.700 12.800l3.600 3.600M78.300 12.800l-3.600 3.600" stroke="#5b5957" stroke-width="1.200"/>
  <!-- search toggle icon -->
  <circle cx="759.900" cy="11.100" r="5" fill="none" stroke="#1e1e1e" stroke-width="1.500"/>
  <path d="M763.500 14.800l3.300 3.400" stroke="#1e1e1e" stroke-width="2"/>
  <!-- selection tool icon -->
  <path d="M783.500 6.500h13v12h-13z" fill="none" stroke="#cfcfcf" stroke-width="1.200" stroke-dasharray="3 2"/>
  <path d="M789.800 10.800h6.800v6.400l-2.200-2.200l-2 2l-1.600-1.600l2-2z" fill="#cfcfcf" stroke="#5b5957" stroke-width="0.800" paint-order="stroke"/>
  <!-- search icon -->
  <circle cx="17.500" cy="39.100" r="4.500" fill="none" stroke="#333" stroke-width="1.300"/>
  <path d="M20.800 42.500l4.500 4.300" stroke="#333" stroke-width="1.700" stroke-linecap="round"/>
  <!-- close -->
  <path d="M785.200 36.900l7.200 7.200M792.400 36.900l-7.200 7.200" stroke="#444" stroke-width="1.100"/>
  <!-- chevron right -->
  <path d="M787.500 244.500l5.300 4.800l-5.300 4.800" fill="none" stroke="#f4f4f4" stroke-width="4.400" opacity="0.700"/><path d="M787.500 244.500l5.300 4.800l-5.300 4.800" fill="none" stroke="#555" stroke-width="2.400"/>
  <!-- pager dots -->
  <circle cx="350.9" cy="381.3" r="3.4" fill="#404040"/><circle cx="364.8" cy="381.3" r="3.4" fill="#c9c9c9"/><circle cx="378.8" cy="381.3" r="3.4" fill="#c9c9c9"/><circle cx="392.7" cy="381.3" r="3.4" fill="#c9c9c9"/><circle cx="406.6" cy="381.3" r="3.4" fill="#c9c9c9"/><circle cx="420.5" cy="381.3" r="3.4" fill="#c9c9c9"/><circle cx="434.5" cy="381.3" r="3.4" fill="#c9c9c9"/><circle cx="448.4" cy="381.3" r="3.4" fill="#c9c9c9"/>
  <!-- info icons -->
  <g transform="translate(249,358.6)"><circle r="5" fill="#6e6e6e"/><rect x="-0.9" y="-1.0" width="1.9" height="3.8" fill="#fff"/><rect x="-1.7" y="-1.0" width="1.6" height="1.0" fill="#fff"/><rect x="-1.7" y="1.9" width="3.500" height="1.0" fill="#fff"/><rect x="-0.9" y="-3.4" width="1.9" height="1.7" fill="#fff"/></g><g transform="translate(506,358.6)"><circle r="5" fill="#6e6e6e"/><rect x="-0.9" y="-1.0" width="1.9" height="3.8" fill="#fff"/><rect x="-1.7" y="-1.0" width="1.6" height="1.0" fill="#fff"/><rect x="-1.7" y="1.9" width="3.500" height="1.0" fill="#fff"/><rect x="-0.9" y="-3.4" width="1.9" height="1.7" fill="#fff"/></g><g transform="translate(763,358.6)"><circle r="5" fill="#6e6e6e"/><rect x="-0.9" y="-1.0" width="1.9" height="3.8" fill="#fff"/><rect x="-1.7" y="-1.0" width="1.6" height="1.0" fill="#fff"/><rect x="-1.7" y="1.9" width="3.500" height="1.0" fill="#fff"/><rect x="-0.9" y="-3.4" width="1.9" height="1.7" fill="#fff"/></g>
  <!-- annotation lines -->
  <path d="M119.5 360.5H195" stroke="#2b2b2b" stroke-width="3"/>
  <path d="M216.4 382L188.3 464.3" stroke="#2b2b2b" stroke-width="3.1"/>
  <!-- annotation circles -->
  <circle cx="165.6" cy="43.8" r="21.9" fill="#fff" stroke="#4a9911" stroke-width="3.1"/><circle cx="90.5" cy="104.4" r="21.9" fill="none" stroke="#4a9911" stroke-width="3.1"/><circle cx="122.6" cy="421.5" r="21.9" fill="#fff" stroke="#4a9911" stroke-width="3.1"/><circle cx="216.75" cy="360.4" r="21.9" fill="#fff" stroke="#4a9911" stroke-width="3.1"/><circle cx="482.6" cy="381.4" r="21.9" fill="#fff" stroke="#4a9911" stroke-width="3.1"/><circle cx="726.5" cy="362.4" r="21.9" fill="#fff" stroke="#4a9911" stroke-width="3.1"/>
  <!-- mouse cursor -->
  <path d="M592.400 396.400v10.800l2.500-2.200l1.500 3.300l1.700-0.700l-1.500-3.300l3.600-0.200z" fill="#fff" stroke="#2a2d3e" stroke-width="0.900" stroke-linejoin="round"/>
</svg>
<svg class="abs" style="left:0;top:0;will-change:transform;font-family:'Liberation Sans',sans-serif" width="800" height="543" viewBox="0 0 800 543" xml:space="preserve"><text x="157.10" y="49.10" font-size="16.4" font-weight="bold" stroke="#666666" stroke-width="0.2" fill="#666666" textLength="13.30" lengthAdjust="spacingAndGlyphs">A</text>
<text x="83.00" y="110.10" font-size="16.4" font-weight="bold" stroke="#666666" stroke-width="0.2" fill="#666666" textLength="10.90" lengthAdjust="spacingAndGlyphs">B</text>
<text x="115.80" y="427.30" font-size="16.4" font-weight="bold" stroke="#666666" stroke-width="0.2" fill="#666666" textLength="11.30" lengthAdjust="spacingAndGlyphs">C</text>
<text x="209.00" y="366.10" font-size="16.4" font-weight="bold" stroke="#666666" stroke-width="0.2" fill="#666666" textLength="12.10" lengthAdjust="spacingAndGlyphs">D</text>
<text x="476.00" y="387.10" font-size="16.4" font-weight="bold" stroke="#666666" stroke-width="0.2" fill="#666666" textLength="9.30" lengthAdjust="spacingAndGlyphs">E</text>
<text x="720.00" y="368.10" font-size="16.4" font-weight="bold" stroke="#666666" stroke-width="0.2" fill="#666666" textLength="9.10" lengthAdjust="spacingAndGlyphs">F</text></svg>
</body></html>
